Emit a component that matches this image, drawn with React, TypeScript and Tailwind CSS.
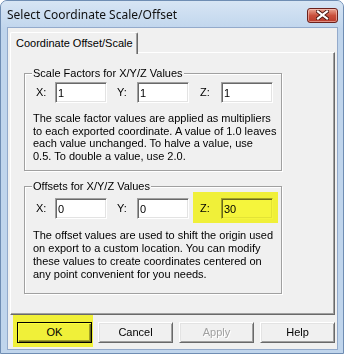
import React from 'react';

const sans = "font-['Liberation_Sans',Arial,sans-serif]";

function Field({ label, value, labelW, ml = 0, hl }: { label: string; value: string; labelW: number; ml?: number; hl?: boolean }) {
  return (
    <div className="flex items-center" style={{ marginLeft: ml }}>
      <span className="leading-[13px]" style={{ width: labelW }}>
        {label}
      </span>
      <input
        readOnly
        value={value}
        className={
          'h-[21px] w-[52px] pl-[2px] text-[11px] leading-[13px] text-black outline-none border ' +
          (hl
            ? 'bg-[#f5f53c] border-t-[#a0a026] border-l-[#a0a026] border-b-[#f5f53c] border-r-[#f5f53c] shadow-[inset_1px_1px_0_#69691a,inset_-1px_-1px_0_#e3e336]'
            : 'bg-white border-t-[#a0a0a0] border-l-[#a0a0a0] border-b-white border-r-white shadow-[inset_1px_1px_0_#696969,inset_-1px_-1px_0_#e3e3e3]')
        }
      />
    </div>
  );
}

function Highlight({ className }: { className: string }) {
  return <span className={`pointer-events-none absolute bg-[#ffff3c] mix-blend-multiply ${className}`} />;
}

function GroupBox({ title, height, children }: { title: string; height: number; children: React.ReactNode }) {
  return (
    <div
      className="w-[258px] border border-[#a0a0a0] shadow-[inset_1px_1px_0_white,1px_1px_0_white]"
      style={{ height }}
    >
      <div className="-mt-[7px] ml-[7px] w-fit bg-[#f0f0f0] px-[1px] leading-[13px]">{title}</div>
      {children}
    </div>
  );
}

function Button({ children, disabled, isDefault }: { children: React.ReactNode; disabled?: boolean; isDefault?: boolean }) {
  return (
    <button
      className={
        'h-[21px] w-[75px] bg-[#f0f0f0] text-[11px] leading-[13px] ' +
        (isDefault
          ? 'border border-black shadow-[inset_1px_1px_0_white,inset_-1px_-1px_0_#696969,inset_-2px_-2px_0_#a0a0a0]'
          : 'border border-t-white border-l-white border-r-[#696969] border-b-[#696969] shadow-[inset_1px_1px_0_#e3e3e3,inset_-1px_-1px_0_#a0a0a0]') +
        (disabled ? ' text-[#a0a0a0] [text-shadow:1px_1px_0_white]' : ' text-black')
      }
    >
      {children}
    </button>
  );
}

export default function App() {
  return (
    <div className={`h-[354px] w-[344px] overflow-hidden rounded-t-[7px] border border-[#6f8db3] bg-[#c0d5ec] text-[11px] text-black ${sans}`}>
      {/* title bar */}
      <div className="flex h-[27px] items-center justify-between bg-gradient-to-b from-[#d7e5f4] to-[#c1d6ed] pl-[6px] pr-[5px]">
        <span className="font-['Noto_Sans',sans-serif] text-[12px] leading-[16px] text-[#111]">
          Select Coordinate Scale/Offset
        </span>
        <div className="mt-[1px] flex h-[15px] w-[31px] items-center justify-center rounded-[3px] border border-[#6b211c] bg-gradient-to-b from-[#e8a493] via-[#c9503d] to-[#b8392a] shadow-[inset_0_0_0_1px_rgba(255,210,200,0.55)]">
          <svg width="13" height="10" viewBox="0 0 13 10">
            <path d="M2 1.5 L11 8.5 M11 1.5 L2 8.5" stroke="#4a1612" strokeWidth="4" strokeLinecap="square" />
            <path d="M2 1.5 L11 8.5 M11 1.5 L2 8.5" stroke="white" strokeWidth="2.2" strokeLinecap="square" />
          </svg>
        </div>
      </div>

      {/* client area */}
      <div className="ml-[7px] flex h-[321px] w-[329px] flex-col bg-[#f0f0f0] px-[2px] pt-[4px] shadow-[0_0_0_1px_#93aacb]">
        {/* tab header */}
        <div className="relative z-10 -mb-[2px] flex h-[22px] w-[128px] items-center rounded-t-[2px] border-l border-t border-r border-l-white border-t-white border-r-[#696969] bg-[#f0f0f0] pb-[1px] pl-[5px] shadow-[inset_-1px_0_0_#a0a0a0]">
          Coordinate Offset/Scale
        </div>

        {/* tab panel */}
        <div className="flex h-[263px] w-[325px] flex-col border border-l-white border-t-white border-r-[#696969] border-b-[#696969] pl-[13px] pt-[20px] shadow-[inset_-1px_-1px_0_#a0a0a0]">
          <GroupBox title="Scale Factors for X/Y/Z Values" height={98}>
            <div className="mt-[2px] flex pl-[11px]">
              <Field label="X:" value="1" labelW={19} />
              <Field label="Y:" value="1" labelW={20} ml={10} />
              <Field label="Z:" value="1" labelW={21} ml={11} />
            </div>
            <p className="mt-[9px] whitespace-nowrap pl-[8px] leading-[12.7px]">
              The scale factor values are applied as multipliers
              <br />
              to each exported coordinate. A value of 1.0 leaves
              <br />
              each value unchanged. To halve a value, use
              <br />
              0.5. To double a value, use 2.0.
            </p>
          </GroupBox>

          <div className="mt-[15px]">
            <GroupBox title="Offsets for X/Y/Z Values" height={108}>
              <div className="mt-[5px] flex pl-[11px]">
                <Field label="X:" value="0" labelW={19} />
                <Field label="Y:" value="0" labelW={20} ml={10} />
                <div className="relative">
                  <Highlight className="-bottom-[4px] -right-[5px] -top-[6px] left-[4px]" />
                  <div className="relative">
                    <Field label="Z:" value="30" labelW={21} ml={11} hl />
                  </div>
                </div>
              </div>
              <p className="mt-[10px] whitespace-nowrap pl-[8px] leading-[13px]">
                The offset values are used to shift the origin used
                <br />
                on export to a custom location. You can modify
                <br />
                these values to create coordinates centered on
                <br />
                any point convenient for you needs.
              </p>
            </GroupBox>
          </div>
        </div>

        {/* buttons */}
        <div className="mt-[7px] flex gap-[6px] pl-[7px]">
          <div className="relative">
            <Button isDefault>OK</Button>
            <Highlight className="-bottom-[4px] -left-[4px] -right-[1px] -top-[7px]" />
          </div>
          <Button>Cancel</Button>
          <Button disabled>Apply</Button>
          <Button>Help</Button>
        </div>
      </div>
    </div>
  );
}
